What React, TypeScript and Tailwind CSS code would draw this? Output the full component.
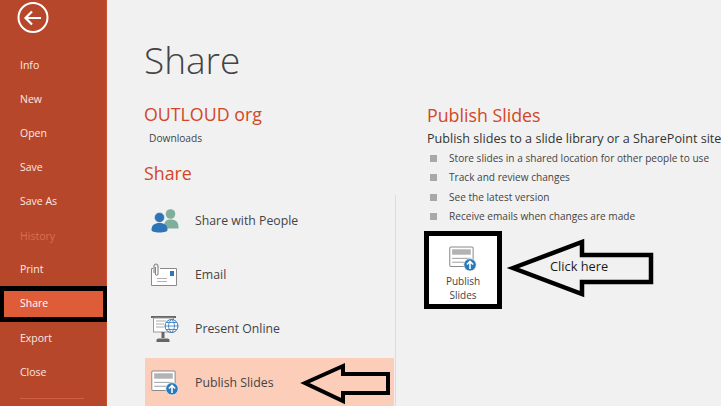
import React from "react";

const navItems = ["Info", "New", "Open", "Save", "Save As", "History", "Print", "Share", "Export", "Close"];

const bullets = [
  "Store slides in a shared location for other people to use",
  "Track and review changes",
  "See the latest version",
  "Receive emails when changes are made",
];

function PublishIcon() {
  return (
    <svg width="28" height="26" viewBox="0 0 36 33" fill="none">
      <rect x="1" y="1" width="30" height="25" rx="1.500" fill="#fff" stroke="#8a8a8a" strokeWidth="1.300" />
      <rect x="4" y="4" width="24" height="7" fill="#b3b3b3" />
      <rect x="4" y="15" width="24" height="1.300" fill="#a0a0a0" />
      <rect x="4" y="20" width="16" height="1.300" fill="#a0a0a0" />
      <circle cx="27" cy="24" r="8" fill="#2b79b9" stroke="#f4f4f4" />
      <path d="M27 29.500v-10M23 23.500l4-4 4 4" stroke="#fff" strokeWidth="2" />
    </svg>
  );
}

function PeopleIcon() {
  return (
    <svg width="28" height="24" viewBox="0 0 28 24">
      <circle cx="19.500" cy="5" r="4.800" fill="#7fae9d" />
      <path d="M13 18c0-6 2.500-7.500 6.500-7.500S27.500 12 27.500 18v1.500H13z" fill="#7fae9d" />
      <circle cx="8.500" cy="8.500" r="5" fill="#2f75b5" stroke="#f1f1f1" strokeWidth="0.500" />
      <path d="M0.500 21c0-5 3-7 8-7s8 2 8 7c0 1.500-3 2.500-8 2.500S0.500 22.500 0.500 21z" fill="#2f75b5" />
    </svg>
  );
}

function EmailIcon() {
  return (
    <svg width="27" height="24" viewBox="0 0 27 24" fill="none">
      <path d="M9 5.500h16.500v17H0.500v-17H2" fill="#fff" stroke="#8a8a8a" />
      <rect x="19" y="8" width="4" height="5" fill="#2f75b5" />
      <rect x="6" y="15" width="10" height="1" fill="#b3b3b3" />
      <rect x="6" y="18" width="10" height="1" fill="#b3b3b3" />
      <path d="M3 10V3a2 2 0 0 1 4 0V11a1.300 1.300 0 0 1-2.600 0V4" stroke="#777" strokeWidth="1" />
    </svg>
  );
}

function PresentIcon() {
  return (
    <svg width="28" height="27" viewBox="0 0 28 27" fill="none">
      <rect x="0" y="0" width="25" height="2" fill="#666" />
      <rect x="2.500" y="2" width="20" height="14" fill="#fff" stroke="#999" />
      <path d="M5 5h10M5 8h8M5 11h8" stroke="#aaa" />
      <circle cx="20.500" cy="10" r="6.500" fill="#fff" stroke="#2f75b5" />
      <path d="M14 10h13M20.500 3.500c-4 4-4 9 0 13M20.500 3.500c4 4 4 9 0 13M15 6.500h11M15 13.500h11" stroke="#2f75b5" strokeWidth="0.800" />
      <path d="M12 16v6" stroke="#666" strokeWidth="3" />
      <path d="M5.500 26v-2q0-1.500 2-1.500h9q2 0 2 1.500v2z" fill="#666" />
    </svg>
  );
}

const shareItems = [
  { label: "Share with People", icon: <PeopleIcon /> },
  { label: "Email", icon: <EmailIcon /> },
  { label: "Present Online", icon: <PresentIcon /> },
  { label: "Publish Slides", icon: <PublishIcon />, active: true },
];

export default function App() {
  return (
    <div className="relative flex h-[406px] w-[721px] overflow-hidden bg-[#f1f1f1] font-['Open_Sans',sans-serif] text-[#444]">
      <aside className="flex h-full w-[107px] shrink-0 flex-col border-r border-[#c9502e] bg-[#b7472a] text-[10.500px] text-[#f8e9e4]">
        <div className="h-[47.500px] pl-[17px] pt-px">
          <svg width="32" height="33" viewBox="0 0 32 33" fill="none" stroke="#fff">
            <circle cx="16" cy="16.500" r="14.500" strokeWidth="2" />
            <path d="M24 17H9M15 10.500 8.500 17l6.500 6.500" strokeWidth="2.200" />
          </svg>
        </div>
        {navItems.map((item) =>
          item === "Share" ? (
            <div key={item} className="-my-px h-[36px] w-[107px] border-x-4 border-y-[5px] border-black">
              <div className="flex h-full items-center bg-[#df5c39] pl-4 text-white">{item}</div>
            </div>
          ) : (
            <div
              key={item}
              className={`flex h-[34.200px] items-center pl-5 pt-[2px] ${item === "History" ? "text-[#dc6e50]" : ""} ${item === "Print" ? "border-b border-[#cf5f40] pt-0" : ""}`}
            >
              {item}
            </div>
          ),
        )}
        <div className="ml-5 mt-[9px] h-px w-16 bg-[#cf5f40]" />
      </aside>

      <main className="flex min-w-0 flex-1">
        <section className="w-[288px] shrink-0 pl-[37px]">
          <h1 className="mt-[35px] text-[37px] font-light leading-[50px] text-[#444]">Share</h1>
          <h2 className="mt-[16px] text-[17.800px] leading-[26px] text-[#d24726]">OUTLOUD org</h2>
          <p className="mt-[4px] pl-[5px] text-[10.200px] leading-[14px] text-[#444]">Downloads</p>
          <h2 className="mt-[15px] text-[17.800px] leading-[26px] text-[#d24726]">Share</h2>
          <ul className="ml-px mt-[10px] w-[249px] text-[12.300px] text-[#444]">
            {shareItems.map((item) => (
              <li
                key={item.label}
                className={`flex h-[54px] items-center pb-[4px] ${item.active ? "bg-[#fccdb8]" : ""}`}
              >
                <span className="flex w-[50px] justify-start pl-[6px]">{item.icon}</span>
                {item.label}
              </li>
            ))}
          </ul>
        </section>

        <section className="relative flex-1 pl-[32px]">
          <div className="absolute left-0 top-[195px] h-[211px] w-px bg-[#dcdcdc]" />
          <h2 className="mt-[102px] text-[17.800px] leading-[26px] text-[#d24726]">Publish Slides</h2>
          <p className="mt-[1px] whitespace-nowrap text-[12.600px] leading-[20px] text-[#333]">
            Publish slides to a slide library or a SharePoint site
          </p>
          <ul className="text-[10.100px] leading-[19.300px] text-[#444]">
            {bullets.map((b) => (
              <li key={b} className="flex items-center">
                <span className="ml-[3px] mr-[12px] size-[7px] bg-[#a8a8a8]" />
                {b}
              </li>
            ))}
          </ul>
          <button className="mt-[5px] flex h-[78px] w-[78px] -translate-x-[3px] flex-col items-center border-[5px] border-black bg-white pt-[10px] text-[10px] font-medium leading-[14px] text-[#444]">
            <PublishIcon />
            <span className="mt-[2px]">Publish</span>
            <span>Slides</span>
          </button>
        </section>
      </main>

      {/* hand drawn arrows over the screenshot */}
      <svg className="absolute left-[300px] top-[362px]" width="92" height="44" viewBox="0 0 92 44" fill="none">
        <path d="M5 21 L43 4 V12 H88 V31 H43 V39 Z" stroke="#000" strokeWidth="4" />
      </svg>
      <svg className="absolute left-[506px] top-[237px]" width="150" height="62" viewBox="0 0 150 62" fill="none">
        <path d="M7 31 L76 5 V18 H145 V45 H76 V57 Z" fill="#f1f1f1" stroke="#000" strokeWidth="4.500" />
      </svg>
      <div className="absolute left-[550px] top-[258px] text-[12.800px] leading-[16px] text-[#1a1a1a]">Click here</div>
    </div>
  );
}
